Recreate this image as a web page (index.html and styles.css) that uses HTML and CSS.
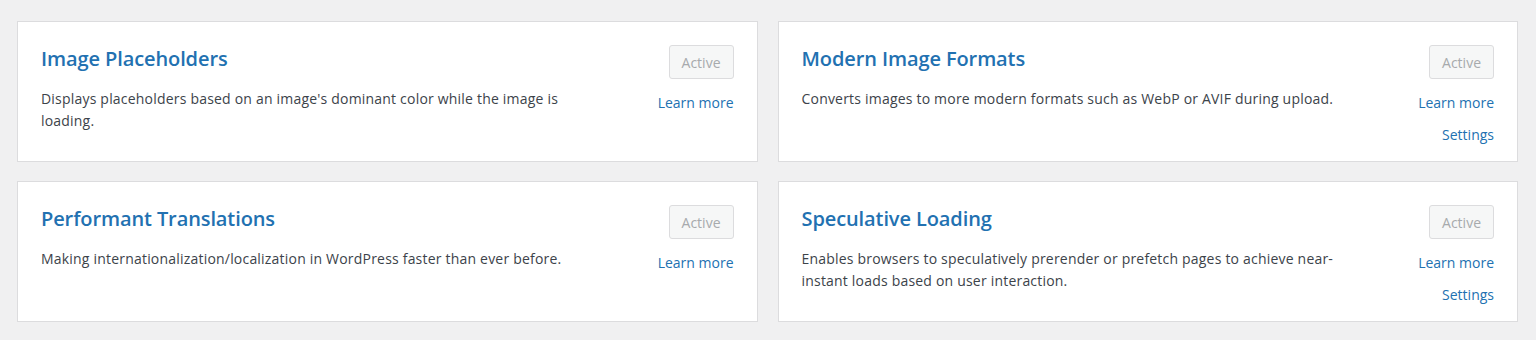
FILE: index.html
```html
<!DOCTYPE html>
<html lang="en">
<head>
    <meta charset="UTF-8" />
    <title>Performance Features</title>
    <link rel="stylesheet" href="styles.css">
</head>
<body>
    <main class="features">
        <div class="card">
            <div class="info">
                <h3>Image Placeholders</h3>
                <p>Displays placeholders based on an image's dominant color while the image is loading.</p>
            </div>
            <div class="actions">
                <button disabled>Active</button>
                <a href="#">Learn more</a>
            </div>
        </div>

        <div class="card">
            <div class="info">
                <h3>Modern Image Formats</h3>
                <p>Converts images to more modern formats such as WebP or AVIF during upload.</p>
            </div>
            <div class="actions">
                <button disabled>Active</button>
                <a href="#">Learn more</a>
                <a href="#">Settings</a>
            </div>
        </div>

        <div class="card">
            <div class="info">
                <h3>Performant Translations</h3>
                <p>Making internationalization/localization in WordPress faster than ever before.</p>
            </div>
            <div class="actions">
                <button disabled>Active</button>
                <a href="#">Learn more</a>
            </div>
        </div>

        <div class="card">
            <div class="info">
                <h3>Speculative Loading</h3>
                <p>Enables browsers to speculatively prerender or prefetch pages to achieve near-instant loads based on user interaction.</p>
            </div>
            <div class="actions">
                <button disabled>Active</button>
                <a href="#">Learn more</a>
                <a href="#">Settings</a>
            </div>
        </div>
    </main>
</body>
</html>
```

FILE: styles.css
```css
body {
    font-family: "Open Sans", "Noto Sans", sans-serif;
    background: #f0f0f1;
    color: #3c434a;
    margin: 0;
    padding: 21px 18px 0 17px;
}
.features {
    display: grid;
    grid-template-columns: 1fr 1fr;
    gap: 19px 20px;
}
.card {
    background: #fff;
    border: 1px solid #dcdcde;
    padding: 23px 23px 16px 23px;
    display: flex;
    justify-content: space-between;
    gap: 24px;
}
.info {
    max-width: 550px;
}
h3 {
    margin: 0;
    font-size: 20px;
    font-weight: 600;
    line-height: 28px;
    color: #2271b1;
    letter-spacing: -0.1px;
}
p {
    margin: 15px 0 0;
    font-size: 14px;
    line-height: 22px;
    letter-spacing: 0.2px;
}
.actions {
    display: flex;
    flex-direction: column;
    align-items: flex-end;
    flex-shrink: 0;
}
button {
    font-family: inherit;
    font-size: 14px;
    color: #a7aaad;
    background: #f6f7f7;
    border: 1px solid #dcdcde;
    border-radius: 3px;
    height: 34px;
    padding: 0 12px;
    margin-bottom: 14px;
}
.actions a {
    font-size: 14px;
    line-height: 20px;
    color: #2271b1;
    text-decoration: none;
}
.actions a + a {
    margin-top: 12px;
}
```
